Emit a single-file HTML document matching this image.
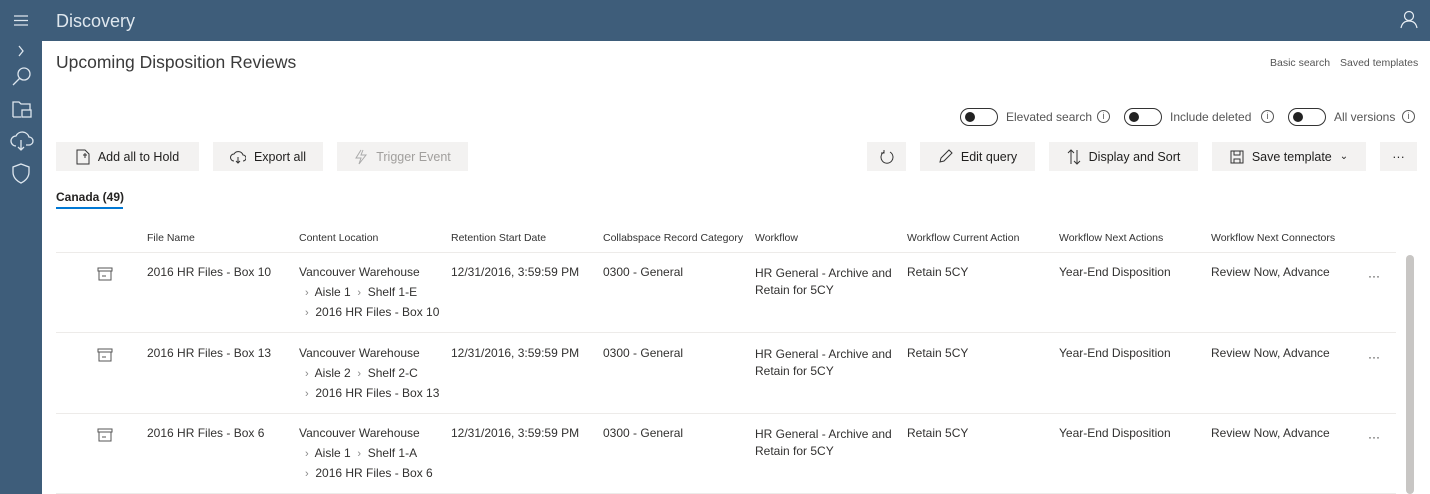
<!DOCTYPE html>
<html><head><style>
*{margin:0;padding:0;box-sizing:border-box}
body{width:1430px;height:494px;overflow:hidden;background:#fff;font-family:"Liberation Sans",sans-serif;color:#323130;position:relative}
.a{position:absolute;white-space:nowrap}
.hdr{left:0;top:0;width:1430px;height:41px;background:#3e5d7a}
.side{left:0;top:0;width:42px;height:494px;background:#3e5d7a}
.btn{position:absolute;top:142px;height:29px;background:#f3f2f1;font-size:12.5px;display:flex;align-items:center;justify-content:center;gap:8px;color:#201f1e}
.tog{position:absolute;top:108px;width:38px;height:18px;border:1px solid #333;border-radius:10px}
.tog:after{content:"";position:absolute;left:4px;top:3px;width:10px;height:10px;border-radius:50%;background:#222}
.lbl{font-size:12px;color:#555;top:110px}
.info{position:absolute;top:110px;width:13px;height:13px;border:1px solid #555;border-radius:50%;font-size:9px;text-align:center;line-height:11px;color:#555}
.th{font-size:10.5px;top:232px;color:#333}
.td{font-size:12px;color:#323130}
.sep{left:56px;width:1340px;height:1px;background:#edebe9}
.chev{color:#888;font-size:11px}
</style></head><body>
<div class="a hdr"></div>
<div class="a side"></div>
<div class="a" style="left:56px;top:11px;font-size:18px;color:#dfe7ee">Discovery</div>
<svg class="a" style="left:0;top:0" width="42" height="190" fill="none" stroke="#dde6ee" stroke-width="1.3">
<path d="M14 16h14M14 20.5h14M14 25h14"/>
<path d="M19 46l4 5-4 5"/>
<circle cx="24" cy="74" r="6"/><path d="M19.5 78.5L13 85"/>
<path d="M13 117V102h6l2 2h9v6M13 117h8"/><rect x="22" y="110" width="9" height="7"/>
<path d="M16 146a5 5 0 010-10a7 7 0 0113 1a4 4 0 010 8h-3M21 140v10M18 147l3 3 3-3"/>
<path d="M21 164l8 3v5c0 6-4 9-8 11-4-2-8-5-8-11v-5z"/>
</svg>
<svg class="a" style="left:1400px;top:10px" width="18" height="20" fill="none" stroke="#e8eef4" stroke-width="1.2"><circle cx="9" cy="6" r="4.5"/><path d="M1 18c1-5 4-7 8-7s7 2 8 7"/></svg>
<div class="a" style="left:56px;top:52px;font-size:17.5px;color:#3a3a3a">Upcoming Disposition Reviews</div>
<div class="a" style="left:1270px;top:57px;font-size:10.5px;color:#555">Basic search</div>
<div class="a" style="left:1340px;top:57px;font-size:10.5px;color:#555">Saved templates</div>

<div class="tog" style="left:960px"></div><div class="a lbl" style="left:1006px">Elevated search</div><div class="info" style="left:1097px">i</div>
<div class="tog" style="left:1124px"></div><div class="a lbl" style="left:1170px">Include deleted</div><div class="info" style="left:1261px">i</div>
<div class="tog" style="left:1288px"></div><div class="a lbl" style="left:1334px">All versions</div><div class="info" style="left:1402px">i</div>

<div class="btn" style="left:56px;width:143px"><svg width="14" height="16" fill="none" stroke="#333"><path d="M1 1h8l4 4v10H1z"/><path d="M9 4v5M7 6h4"/></svg>Add all to Hold</div>
<div class="btn" style="left:213px;width:110px"><svg width="16" height="14" fill="none" stroke="#333"><path d="M4 11a3.5 3.5 0 010-7a5 5 0 019 1a3 3 0 010 6M8 7v6M6 11l2 2 2-2"/></svg>Export all</div>
<div class="btn" style="left:337px;width:131px;color:#a19f9d"><svg width="14" height="16" fill="none" stroke="#aaa"><path d="M7 1L2 9h5l-2 6 7-9H7l2-5"/></svg>Trigger Event</div>
<div class="btn" style="left:867px;width:39px"><svg width="16" height="16" fill="none" stroke="#333"><path d="M11 3a6 6 0 11-6 0M5 1v3H2"/></svg></div>
<div class="btn" style="left:920px;width:115px"><svg width="15" height="15" fill="none" stroke="#333"><path d="M2 13l1-4 8-8 3 3-8 8z"/></svg>Edit query</div>
<div class="btn" style="left:1049px;width:149px"><svg width="14" height="16" fill="none" stroke="#333"><path d="M4 15V1M1 4l3-3 3 3M10 1v14M7 12l3 3 3-3"/></svg>Display and Sort</div>
<div class="btn" style="left:1212px;width:154px"><svg width="14" height="14" fill="none" stroke="#333"><rect x="1" y="1" width="12" height="12"/><path d="M4 1v4h6V1M4 13V9h6v4"/></svg>Save template <span style="font-size:10px">&#8964;</span></div>
<div class="btn" style="left:1380px;width:37px">···</div>

<div class="a" style="left:56px;top:190px;font-size:12px;font-weight:bold;color:#252423">Canada (49)</div>
<div class="a" style="left:56px;top:207px;width:67px;height:2px;background:#0078d4"></div>

<div class="a th" style="left:147px">File Name</div>
<div class="a th" style="left:299px">Content Location</div>
<div class="a th" style="left:451px">Retention Start Date</div>
<div class="a th" style="left:603px">Collabspace Record Category</div>
<div class="a th" style="left:755px">Workflow</div>
<div class="a th" style="left:907px">Workflow Current Action</div>
<div class="a th" style="left:1059px">Workflow Next Actions</div>
<div class="a th" style="left:1211px">Workflow Next Connectors</div>
<div class="a sep" style="top:252px"></div>

<div id="rows"></div>
<div class="a" style="left:1406px;top:255px;width:8px;height:239px;background:#c8c6c4;border-radius:4px"></div>
<script>
var d=[["10","1","1-E",265],["13","2","2-C",346],["6","1","1-A",426]];
var h="";
d.forEach(function(r){var t=r[3];
h+='<svg class="a" style="left:97px;top:'+(t+2)+'px" width="16" height="14" fill="none" stroke="#555"><rect x="1" y="1" width="14" height="3"/><path d="M2 4v9h12V4M5 9h4"/></svg>';
h+='<div class="a td" style="left:147px;top:'+t+'px">2016 HR Files - Box '+r[0]+'</div>';
h+='<div class="a td" style="left:299px;top:'+t+'px">Vancouver Warehouse</div>';
h+='<div class="a td" style="left:305px;top:'+(t+20)+'px"><span class="chev">&#x203A;</span>&nbsp; Aisle '+r[1]+' &nbsp;<span class="chev">&#x203A;</span>&nbsp; Shelf '+r[2]+'</div>';
h+='<div class="a td" style="left:305px;top:'+(t+40)+'px"><span class="chev">&#x203A;</span>&nbsp; 2016 HR Files - Box '+r[0]+'</div>';
h+='<div class="a td" style="left:451px;top:'+t+'px">12/31/2016, 3:59:59 PM</div>';
h+='<div class="a td" style="left:603px;top:'+t+'px">0300 - General</div>';
h+='<div class="a td" style="left:755px;top:'+t+'px;line-height:17px">HR General - Archive and<br>Retain for 5CY</div>';
h+='<div class="a td" style="left:907px;top:'+t+'px">Retain 5CY</div>';
h+='<div class="a td" style="left:1059px;top:'+t+'px">Year-End Disposition</div>';
h+='<div class="a td" style="left:1211px;top:'+t+'px">Review Now, Advance</div>';
h+='<div class="a td" style="left:1368px;top:'+(t+4)+'px">···</div>';
h+='<div class="a sep" style="top:'+(t+67)+'px"></div>';});
document.getElementById("rows").innerHTML=h;
</script>
</body></html>
